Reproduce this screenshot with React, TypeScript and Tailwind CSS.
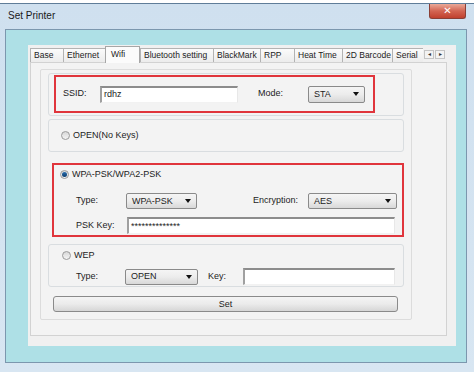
import React from "react";

function Select({ text, w, h = "h-[16px]" }: { text: string; w: string; h?: string }) {
  return (
    <div
      className={`flex items-center ${w} ${h} border border-[#8a8a8a] rounded-[2px] bg-linear-to-b from-[#f5f5f5] via-[#ececec] to-[#d8d8d8] pl-[5px] pr-[5px]`}
    >
      <span className="flex-1 leading-none">{text}</span>
      <span className="w-0 h-0 border-l-[3px] border-r-[3px] border-t-[4px] border-l-transparent border-r-transparent border-t-[#111]" />
    </div>
  );
}

function Input({ w, text }: { w: string; text?: string }) {
  return (
    <div
      className={`flex items-center ${w} h-[17px] bg-white border-t-2 border-l-2 border-r border-b border-t-[#8c8c8c] border-l-[#a0a0a0] border-r-[#e8e8e8] border-b-[#f2f2f2] pl-[2px]`}
    >
      <span className="leading-none">{text}</span>
    </div>
  );
}

function Radio({ checked }: { checked?: boolean }) {
  return (
    <div className="w-[9px] h-[9px] rounded-full border border-[#9a9a9a] bg-linear-to-b from-[#d8d8d8] to-[#f4f4f4] flex items-center justify-center">
      {checked && <div className="w-[5px] h-[5px] rounded-full bg-linear-to-b from-[#2a6fb0] to-[#0c3d6e]" />}
    </div>
  );
}

function Tab({ label, w, selected }: { label: string; w: string; selected?: boolean }) {
  if (selected) {
    return (
      <div
        className={`${w} h-[17px] -mb-px relative z-10 bg-[#fbfbfb] border border-b-0 border-[#a6a6a6] pl-[5px] pt-[3px] leading-none text-[8.5px]`}
      >
        {label}
      </div>
    );
  }
  return (
    <div
      className={`${w} h-[14px] border border-b-0 border-r-0 border-[#b3b3b3] bg-linear-to-b from-[#fbfbfb] to-[#ececec] pl-[3px] pt-[2px] leading-none whitespace-nowrap overflow-hidden text-[8.5px]`}
    >
      {label}
    </div>
  );
}

export default function App() {
  return (
    <div className="w-[474px] h-[372px] overflow-hidden bg-white font-['Liberation_Sans',Arial,sans-serif] text-[9px] text-[#1c1c1c]">
      <div className="mt-[3px] h-[369px] flex flex-col border-t border-[#5f7d99] bg-linear-to-b from-[#cfe0ef] to-[#d8e6f2]">
        {/* title bar */}
        <div className="h-[25px] flex items-start">
          <div className="pl-[8px] pt-[7px] text-[10px] text-[#1a1a1a] leading-none">Set Printer</div>
          <div className="ml-auto mr-[8px] w-[37px] h-[15px] rounded-b-[3px] border border-t-0 border-[#8a3f36] bg-linear-to-b from-[#e9a898] via-[#d26452] to-[#c0402e] flex items-center justify-center">
            <span className="text-white font-bold text-[10px] leading-none font-['DejaVu_Sans',sans-serif]">✕</span>
          </div>
        </div>
        {/* client frame */}
        <div className="ml-[5px] mr-[7px] h-[334px] border border-[#7c97ae] bg-[#aee0e6] pl-[22px] pt-[15px] pr-[9px]">
          <div className="w-[428px] h-[301px] bg-[#f0f0f0] pl-[2px] pt-0">
            {/* tab row */}
            <div className="flex items-end h-[17px] w-[417px]">
              <Tab label="Base" w="w-[33px]" />
              <Tab label="Ethernet" w="w-[42px]" />
              <Tab label="Wifi" w="w-[35px]" selected />
              <Tab label="Bluetooth setting" w="w-[73px]" />
              <Tab label="BlackMark" w="w-[47px]" />
              <Tab label="RPP" w="w-[34px]" />
              <Tab label="Heat Time" w="w-[48px]" />
              <Tab label="2D Barcode" w="w-[50px]" />
              <Tab label="Serial" w="w-[31px]" />
              <div className="flex gap-px ml-[1px] mb-[3px]">
                <div className="w-[10px] h-[9px] border border-[#c4c4c4] bg-[#f3f3f3] text-[6px] leading-[7px] text-center text-[#333]">◂</div>
                <div className="w-[10px] h-[9px] border border-[#c4c4c4] bg-[#f3f3f3] text-[6px] leading-[7px] text-center text-[#333]">▸</div>
              </div>
            </div>
            {/* tab page */}
            <div className="w-[417px] h-[274px] border border-[#d2d2d2] bg-[#f3f3f3] pl-[9px] pt-[6px]">
              <div className="w-[372px] h-[251px] border border-[#dcdcdc] rounded-[2px] pl-[6px] pt-[3px]">
                {/* SSID group */}
                <div className="ml-[1px] w-[356px] h-[43px] border border-[#d9dde0] rounded-[3px] pl-[5px] pt-[1px]">
                  <div className="w-[321px] h-[38px] border-2 border-[#e0353c] flex items-center pl-[7px]">
                    <span className="w-[37px]">SSID:</span>
                    <Input w="w-[138px]" text="rdhz" />
                    <span className="ml-[20px] w-[50px]">Mode:</span>
                    <Select text="STA" w="w-[57px]" h="h-[17px]" />
                  </div>
                </div>
                {/* OPEN group */}
                <div className="ml-[1px] mt-[3px] w-[356px] h-[33px] border border-[#d9dde0] rounded-[3px] flex items-center pl-[12px] gap-[3px]">
                  <Radio />
                  <span>OPEN(No Keys)</span>
                </div>
                {/* WPA */}
                <div className="mt-[11px] ml-[5px] w-[352px] h-[74px] border-2 border-[#e0353c] pl-[6px] pt-[5px]">
                  <div className="flex items-center gap-[3px] h-[9px]">
                    <Radio checked />
                    <span>WPA-PSK/WPA2-PSK</span>
                  </div>
                  <div className="flex items-center mt-[14px] pl-[16px]">
                    <span className="w-[50px]">Type:</span>
                    <Select text="WPA-PSK" w="w-[71px]" />
                    <span className="ml-[56px] w-[55px]">Encryption:</span>
                    <Select text="AES" w="w-[89px]" />
                  </div>
                  <div className="flex items-center mt-[8px] pl-[16px]">
                    <span className="w-[51px]">PSK Key:</span>
                    <Input w="w-[268px]" text="**************" />
                  </div>
                </div>
                {/* WEP group */}
                <div className="ml-[1px] mt-[7px] w-[356px] h-[43px] border border-[#d9dde0] rounded-[3px] pl-[13px] pt-[6px]">
                  <div className="flex items-center gap-[3px] h-[9px]">
                    <Radio />
                    <span>WEP</span>
                  </div>
                  <div className="flex items-center mt-[8px] pl-[14px]">
                    <span className="w-[49px]">Type:</span>
                    <Select text="OPEN" w="w-[73px]" />
                    <span className="ml-[10px] w-[35px]">Key:</span>
                    <Input w="w-[152px]" />
                  </div>
                </div>
                {/* Set button */}
                <div className="mt-[9px] ml-[6px] w-[345px] h-[16px] border border-[#8a8a8a] rounded-[3px] bg-linear-to-b from-[#f4f4f4] via-[#ebebeb] to-[#d6d6d6] flex items-center justify-center">
                  <span className="leading-none">Set</span>
                </div>
              </div>
            </div>
          </div>
        </div>
        <div className="flex-1" />
      </div>
    </div>
  );
}
